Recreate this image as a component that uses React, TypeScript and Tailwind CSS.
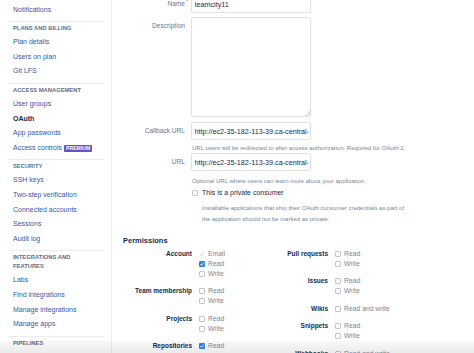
import React from 'react';

type BoxState = 'off' | 'on' | 'locked';

const sections = [
  { title: ['PLANS AND BILLING'], items: ['Plan details', 'Users on plan', 'Git LFS'] },
  { title: ['ACCESS MANAGEMENT'], items: ['User groups', 'OAuth', 'App passwords', 'Access controls'] },
  { title: ['SECURITY'], items: ['SSH keys', 'Two-step verification', 'Connected accounts', 'Sessions', 'Audit log'] },
  { title: ['INTEGRATIONS AND', 'FEATURES'], items: ['Labs', 'Find integrations', 'Manage integrations', 'Manage apps'] },
  { title: ['PIPELINES'], items: [] as string[] },
];

const leftPerms: { label: string; options: [string, BoxState][] }[] = [
  { label: 'Account', options: [['Email', 'locked'], ['Read', 'on'], ['Write', 'off']] },
  { label: 'Team membership', options: [['Read', 'off'], ['Write', 'off']] },
  { label: 'Projects', options: [['Read', 'off'], ['Write', 'off']] },
  { label: 'Repositories', options: [['Read', 'on']] },
];

const rightPerms: { label: string; options: [string, BoxState][] }[] = [
  { label: 'Pull requests', options: [['Read', 'off'], ['Write', 'off']] },
  { label: 'Issues', options: [['Read', 'off'], ['Write', 'off']] },
  { label: 'Wikis', options: [['Read and write', 'off']] },
  { label: 'Snippets', options: [['Read', 'off'], ['Write', 'off']] },
  { label: 'Webhooks', options: [['Read and write', 'off']] },
];

const Box: React.FC<{ state: BoxState }> = ({ state }) => {
  if (state === 'locked') {
    return (
      <svg width="6" height="6" viewBox="0 0 6 6" className="shrink-0">
        <path d="M1 3.2 L2.4 4.6 L5 1.4" fill="none" stroke="#c1c7d0" strokeWidth="0.9" />
      </svg>
    );
  }
  if (state === 'on') {
    return (
      <span className="w-[6px] h-[6px] shrink-0 rounded-[1px] bg-[#2684ff] flex items-center justify-center">
        <svg width="6" height="6" viewBox="0 0 6 6">
          <path d="M1.3 3.1 L2.5 4.3 L4.8 1.7" fill="none" stroke="#fff" strokeWidth="0.9" />
        </svg>
      </span>
    );
  }
  return <span className="w-[6px] h-[6px] shrink-0 rounded-[1px] border border-[#c1c7d0] bg-white" />;
};

const PermColumn: React.FC<{ groups: typeof leftPerms; labelW: string; className: string }> = ({ groups, labelW, className }) => (
  <div className={`flex flex-col gap-[7.5px] ${className}`}>
    {groups.map((g) => (
      <div key={g.label} className="flex">
        <div className={`${labelW} text-right font-bold text-[6.5px] leading-[10px] text-[#172b4d] whitespace-nowrap`}>
          {g.label}
        </div>
        <div className="ml-[7px] flex flex-col">
          {g.options.map(([name, state]) => (
            <div key={name} className="h-[10px] flex items-center gap-[3px] text-[6.8px] text-[#7a869a] whitespace-nowrap">
              <Box state={state} />
              <span>{name}</span>
            </div>
          ))}
        </div>
      </div>
    ))}
  </div>
);

const FieldLabel: React.FC<{ children: React.ReactNode; top?: boolean }> = ({ children, top }) => (
  <div className={`w-[62px] shrink-0 text-right text-[6.6px] text-[#6b778c] ${top ? 'pt-[4px]' : 'self-center'}`}>
    {children}
  </div>
);

const inputCls =
  'h-[18px] w-[120px] ml-[6px] border border-[#dfe1e6] rounded-[2px] px-[2.5px] text-[7.2px] text-[#172b4d] bg-white outline-none';

export default function App() {
  return (
    <div className="relative h-[353px] w-[474px] overflow-hidden bg-white flex font-['Liberation_Sans',Arial,sans-serif]">
      {/* Sidebar */}
      <aside className="w-[112px] shrink-0 border-r border-[#ebecf0] pl-[8px] pr-[7px] pt-[2.7px]">
        <div className="pb-[4px]">
          <div className="h-[14.6px] leading-[14.6px] pl-[5px] text-[7px] text-[#3159ad]">Notifications</div>
        </div>
        {sections.map((s) => (
          <div key={s.title[0]} className="border-t border-[#ebecf0] pt-[2px] pb-[4px]">
            <div className="pl-[5px] mb-[2px] text-[5.8px] leading-[9px] font-bold text-[#5e6c84] whitespace-nowrap">
              {s.title.map((t, i) => (
                <div key={i}>{t}</div>
              ))}
            </div>
            {s.items.map((item) => (
              <div
                key={item}
                className={`h-[14.6px] leading-[14.6px] pl-[5px] text-[7px] whitespace-nowrap flex items-center ${
                  item === 'OAuth' ? 'font-bold text-[#172b4d]' : 'text-[#3159ad]'
                }`}
              >
                {item}
                {item === 'Access controls' && (
                  <span className="ml-[2px] h-[7px] px-[2px] rounded-[1px] bg-[#6554c0] text-white font-bold text-[5px] leading-[7px] tracking-[0.02em]">
                    PREMIUM
                  </span>
                )}
              </div>
            ))}
          </div>
        ))}
      </aside>

      {/* Main form */}
      <main className="flex-1 pl-[11px]">
        <div className="-mt-[5px] flex flex-col">
          <div className="flex">
            <FieldLabel>
              <span className="relative">
                Name
                <span className="absolute -right-[3px] -top-[2px] text-[#de350b] text-[6px] leading-[6px]">*</span>
              </span>
            </FieldLabel>
            <input className={inputCls} defaultValue="teamcity11" />
          </div>

          <div className="flex mt-[4px]">
            <FieldLabel top>Description</FieldLabel>
            <div className="relative ml-[6px]">
              <textarea className="block h-[100px] w-[120px] resize-none border border-[#dfe1e6] rounded-[2px] bg-white outline-none" />
              <svg width="5" height="5" viewBox="0 0 5 5" className="absolute right-[1px] bottom-[1px]">
                <path d="M0 5 L5 0 M2 5 L5 2" stroke="#b3bac5" strokeWidth="0.7" />
              </svg>
            </div>
          </div>

          <div className="flex mt-[5px]">
            <FieldLabel>Callback URL</FieldLabel>
            <input className={inputCls} defaultValue="http://ec2-35-182-113-39.ca-central-1.compute.amazonaws.com:8111" />
          </div>
          <div className="ml-[69px] mt-[3px] leading-[10px] text-[6px] text-[#7a869a] whitespace-nowrap">
            URL users will be redirected to after access authorization. Required for OAuth 2.
          </div>

          <div className="flex">
            <FieldLabel>URL</FieldLabel>
            <input className={inputCls} defaultValue="http://ec2-35-182-113-39.ca-central-1.compute.amazonaws.com:8111" />
          </div>
          <div className="ml-[69px] mt-[5px] leading-[10px] text-[6px] text-[#7a869a] whitespace-nowrap">
            Optional URL where users can learn more about your application.
          </div>

          <div className="ml-[69px] mt-[2px] h-[10px] flex items-center gap-[4px] text-[7px] text-[#172b4d] whitespace-nowrap">
            <Box state="off" />
            <span>This is a private consumer</span>
          </div>
          <div className="ml-[79px] mt-[5px] leading-[10.6px] text-[6px] text-[#7a869a] whitespace-nowrap">
            Installable applications that ship their OAuth consumer credentials as part of
            <br />
            the application should not be marked as private.
          </div>

          <div className="mt-[10.8px] leading-[12px] text-[7.5px] font-bold text-[#172b4d]">Permissions</div>

          <div className="mt-[2px] flex">
            <PermColumn groups={leftPerms} labelW="w-[69px]" className="w-[145px]" />
            <PermColumn groups={rightPerms} labelW="w-[60px]" className="" />
          </div>
        </div>
      </main>

      {/* bottom fade */}
      <div className="pointer-events-none absolute inset-x-0 bottom-0 h-[12px] bg-linear-to-b from-black/[0.03] to-black/[0.08]" />
    </div>
  );
}
